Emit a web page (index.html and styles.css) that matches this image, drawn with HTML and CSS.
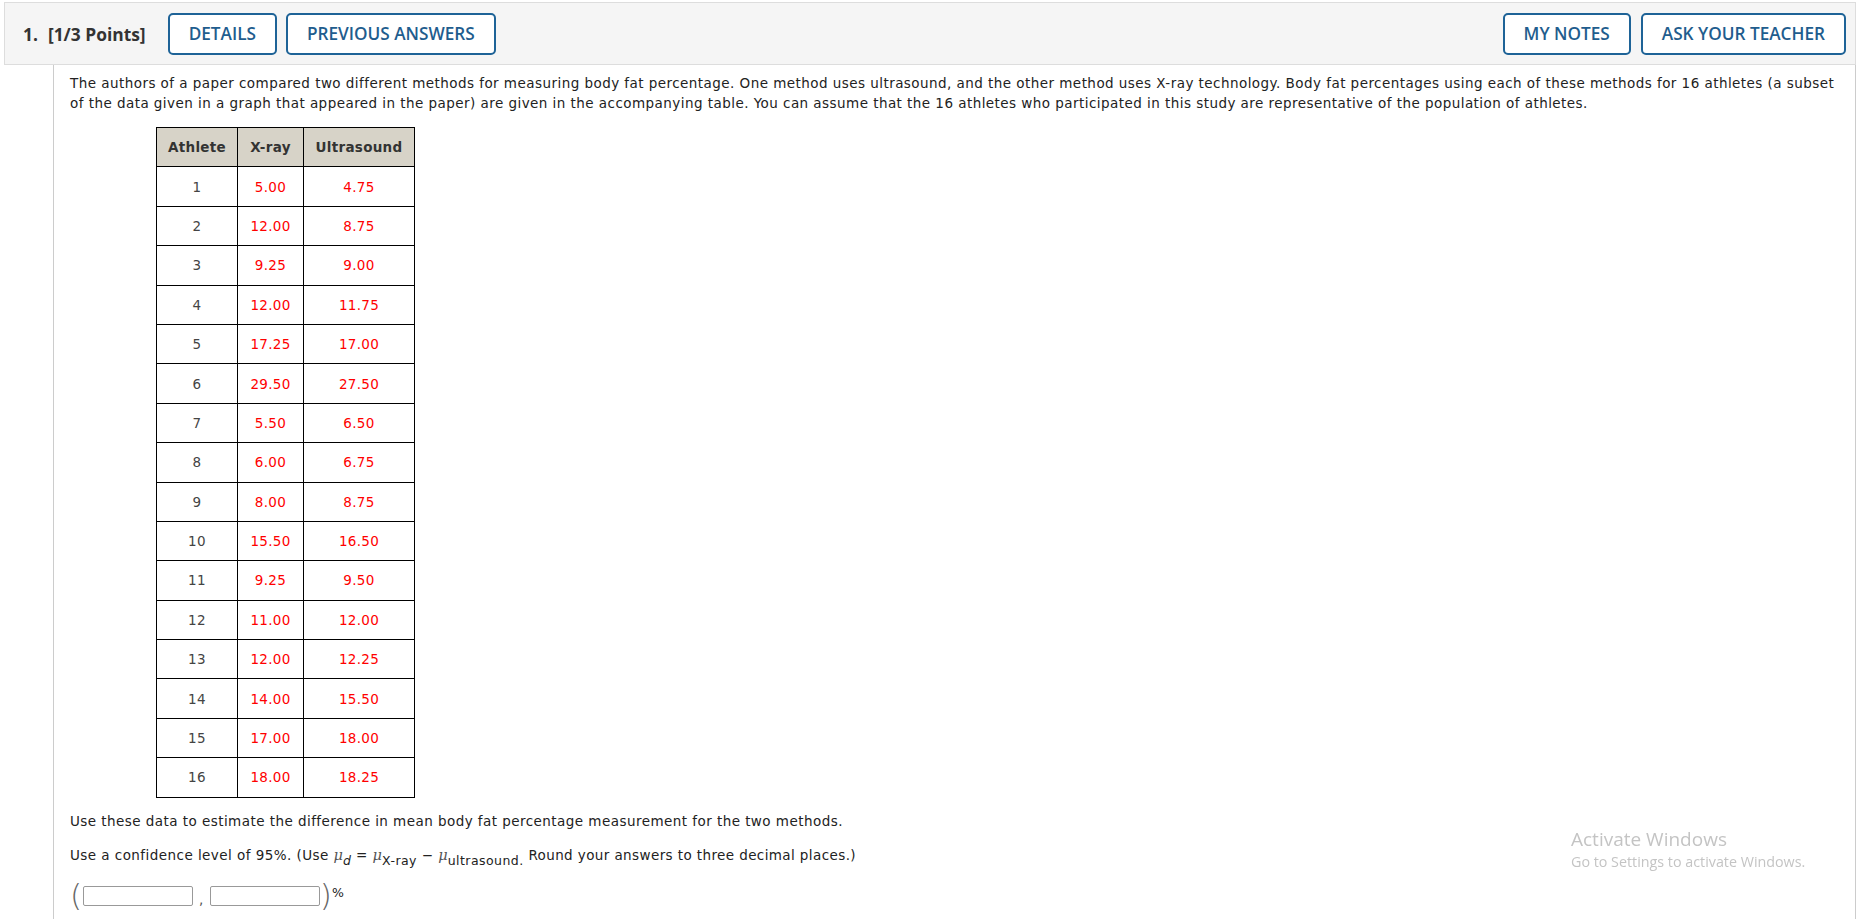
FILE: index.html
```html
<!DOCTYPE html>
<html lang="en">
<head>
  <meta charset="UTF-8" />
  <title>Question 1</title>
  <link rel="stylesheet" href="styles.css">
</head>
<body>
  <div class="question">
    <div class="q-head">
      <span class="q-num">1.</span>
      <span class="q-points">[1/3 Points]</span>
      <a href="#" class="q-btn">DETAILS</a>
      <a href="#" class="q-btn">PREVIOUS ANSWERS</a>
      <span class="spacer"></span>
      <a href="#" class="q-btn">MY NOTES</a>
      <a href="#" class="q-btn">ASK YOUR TEACHER</a>
    </div>

    <div class="q-body">
      <p class="intro">The authors of a paper compared two different methods for measuring body fat percentage. One method uses ultrasound, and the other method uses X-ray technology. Body fat percentages using each of these methods for 16 athletes (a subset of the data given in a graph that appeared in the paper) are given in the accompanying table. You can assume that the 16 athletes who participated in this study are representative of the population of athletes.</p>

      <table class="data">
        <thead>
          <tr><th class="c1">Athlete</th><th class="c2">X-ray</th><th class="c3">Ultrasound</th></tr>
        </thead>
        <tbody>
          <tr><td>1</td><td class="val">5.00</td><td class="val">4.75</td></tr>
          <tr><td>2</td><td class="val">12.00</td><td class="val">8.75</td></tr>
          <tr><td>3</td><td class="val">9.25</td><td class="val">9.00</td></tr>
          <tr><td>4</td><td class="val">12.00</td><td class="val">11.75</td></tr>
          <tr><td>5</td><td class="val">17.25</td><td class="val">17.00</td></tr>
          <tr><td>6</td><td class="val">29.50</td><td class="val">27.50</td></tr>
          <tr><td>7</td><td class="val">5.50</td><td class="val">6.50</td></tr>
          <tr><td>8</td><td class="val">6.00</td><td class="val">6.75</td></tr>
          <tr><td>9</td><td class="val">8.00</td><td class="val">8.75</td></tr>
          <tr><td>10</td><td class="val">15.50</td><td class="val">16.50</td></tr>
          <tr><td>11</td><td class="val">9.25</td><td class="val">9.50</td></tr>
          <tr><td>12</td><td class="val">11.00</td><td class="val">12.00</td></tr>
          <tr><td>13</td><td class="val">12.00</td><td class="val">12.25</td></tr>
          <tr><td>14</td><td class="val">14.00</td><td class="val">15.50</td></tr>
          <tr><td>15</td><td class="val">17.00</td><td class="val">18.00</td></tr>
          <tr><td>16</td><td class="val">18.00</td><td class="val">18.25</td></tr>
        </tbody>
      </table>

      <p class="part">Use these data to estimate the difference in mean body fat percentage measurement for the two methods.</p>

      <p class="part">Use a confidence level of 95%. (Use <span class="mu">μ</span><sub class="it">d</sub> = <span class="mu">μ</span><sub>X-ray</sub> − <span class="mu">μ</span><sub>ultrasound</sub><sub>.</sub> <span class="tail">Round your answers to three decimal places.)</span></p>

      <div class="answer">
        <span class="paren">(</span>
        <input type="text" class="ans-box" />
        <span class="comma">,</span>
        <input type="text" class="ans-box" />
        <span class="paren">)</span>
        <span class="pct">%</span>
      </div>
    </div>
  </div>

  <div class="watermark">
    <div class="wm-title">Activate Windows</div>
    <div class="wm-sub">Go to Settings to activate Windows.</div>
  </div>
</body>
</html>
```

FILE: styles.css
```css
body {
  margin: 0;
  font-family: "DejaVu Sans", Verdana, sans-serif;
  font-size: 13.5px;
  letter-spacing: 0.45px;
  color: #222;
  background: #fff;
}
.question {
  margin: 2px 10px 0 4px;
}
.q-head {
  display: flex;
  align-items: center;
  height: 61px;
  padding: 0 9px 0 18px;
  background-color: #f5f5f5;
  border: 1px solid #ddd;
  font-family: "Open Sans", sans-serif;
  letter-spacing: 0;
}
.q-num {
  font-weight: 700;
  font-size: 17.4px;
  color: #333;
  margin-right: 10px;
}
.q-points {
  font-weight: 700;
  font-size: 17.4px;
  color: #333;
  margin-right: 22px;
}
.spacer {
  flex: 1;
}
.q-btn {
  display: inline-flex;
  align-items: center;
  height: 38px;
  padding: 0 19px;
  margin-right: 9px;
  background: #fff;
  border: 2px solid #1e6397;
  border-radius: 5px;
  color: #1f5d8e;
  font-size: 17.2px;
  font-weight: 600;
  text-decoration: none;
}
.spacer + .q-btn {
  margin-right: 10px;
}
.q-btn:last-child {
  margin-right: 0;
}
.q-body {
  margin-left: 49px;
  min-height: 860px;
  padding: 9px 12px 0 16px;
  border-left: 1px solid #ccc;
  border-right: 1px solid #ccc;
}
.intro {
  margin: 0;
  line-height: 19.5px;
}
.data {
  margin: 14px 0 0 86px;
  border-collapse: collapse;
  text-align: center;
  letter-spacing: 0.3px;
}
.data th,
.data td {
  border: 1px solid #000;
  padding: 0;
  height: 39.4px;
  box-sizing: border-box;
}
.data th {
  background-color: #d7d3c8;
  color: #333;
  font-weight: 700;
}
.data td {
  color: #444;
}
.data .val {
  color: #f00;
}
.c1 { width: 81px; }
.c2 { width: 66px; }
.c3 { width: 111px; }
.part {
  margin: 13px 0 0;
  line-height: 20px;
}
.part + .part {
  margin-top: 14px;
}
.part sub {
  font-size: 12.5px;
  vertical-align: -5px;
  line-height: 0;
}
.tail {
  letter-spacing: 0.4px;
}
.mu {
  font-family: "DejaVu Serif", serif;
  font-style: italic;
  font-size: 14.5px;
  color: #555;
  letter-spacing: 0;
}
.it {
  font-style: italic;
}
.answer {
  display: flex;
  align-items: center;
  margin-top: 16px;
  height: 30px;
}
.paren {
  font-weight: 200;
  font-size: 31px;
  color: #666;
  line-height: 1;
  letter-spacing: 0;
}
.ans-box {
  width: 110px;
  height: 20px;
  box-sizing: border-box;
  margin: 0 0 0 1px;
  padding: 0;
  border: 1px solid #999;
  border-radius: 2px;
  background: #fff;
}
.comma {
  margin: 6px 5px 0 6px;
  color: #555;
}
.pct {
  align-self: flex-start;
  margin-top: 4px;
  font-size: 12.5px;
  letter-spacing: 0;
}
.watermark {
  position: fixed;
  left: 1571px;
  top: 827px;
  font-family: "Open Sans", sans-serif;
  letter-spacing: 0;
  color: #c4c4c4;
}
.wm-title {
  font-size: 19px;
  line-height: 25px;
}
.wm-sub {
  font-size: 14.3px;
  line-height: 19px;
}
```
